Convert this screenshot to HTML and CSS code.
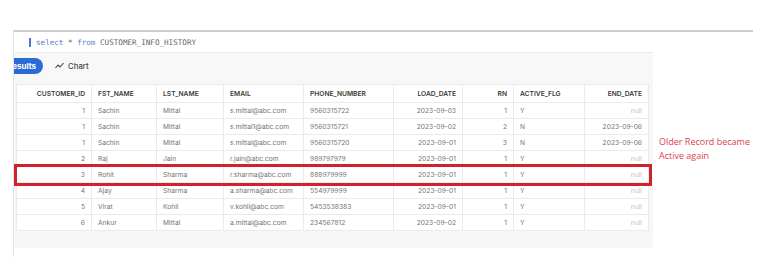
FILE: index.html
```html
<!DOCTYPE html>
<html lang="en">
  <head>
    <meta charset="UTF-8" />
    <meta name="viewport" content="width=device-width, initial-scale=1.0" />
    <title>Customer info history</title>
    <link rel="stylesheet" href="styles.css">
  </head>
  <body>
    <div class="editor">
      <div class="query">
        <span class="cursor"></span>
        <code><span class="kw">select</span> * <span class="kw">from</span> CUSTOMER_INFO_HISTORY</code>
      </div>

      <div class="tabs">
        <div class="pill">Results</div>
        <div class="tab">
          <svg width="9" height="7" viewBox="0 0 9 7">
            <polyline points="0.5,6 3,3 5,5 8.5,1" fill="none" stroke="#444" stroke-width="1.1" />
          </svg>
          Chart
        </div>
      </div>

      <div class="body">
        <div class="grid">
          <table>
            <thead>
              <tr>
                <th class="num c1">CUSTOMER_ID</th>
                <th class="c2">FST_NAME</th>
                <th class="c3">LST_NAME</th>
                <th class="c4">EMAIL</th>
                <th class="c5">PHONE_NUMBER</th>
                <th class="num c6">LOAD_DATE</th>
                <th class="num c7">RN</th>
                <th class="c8">ACTIVE_FLG</th>
                <th class="num c9">END_DATE</th>
              </tr>
            </thead>
            <tbody>
              <tr>
                <td class="num">1</td><td>Sachin</td><td>Mittal</td><td>s.mittal@abc.com</td><td>9560315722</td>
                <td class="num">2023-09-03</td><td class="num">1</td><td>Y</td><td class="num null">null</td>
              </tr>
              <tr>
                <td class="num">1</td><td>Sachin</td><td>Mittal</td><td>s.mittal1@abc.com</td><td>9560315721</td>
                <td class="num">2023-09-02</td><td class="num">2</td><td>N</td><td class="num">2023-09-06</td>
              </tr>
              <tr>
                <td class="num">1</td><td>Sachin</td><td>Mittal</td><td>s.mittal@abc.com</td><td>9560315720</td>
                <td class="num">2023-09-01</td><td class="num">3</td><td>N</td><td class="num">2023-09-06</td>
              </tr>
              <tr>
                <td class="num">2</td><td>Raj</td><td>Jain</td><td>r.jain@abc.com</td><td>989797979</td>
                <td class="num">2023-09-01</td><td class="num">1</td><td>Y</td><td class="num null">null</td>
              </tr>
              <tr class="marked">
                <td class="num">3</td><td>Rohit</td><td>Sharma</td><td>r.sharma@abc.com</td><td>888979999</td>
                <td class="num">2023-09-01</td><td class="num">1</td><td>Y</td><td class="num null">null</td>
              </tr>
              <tr>
                <td class="num">4</td><td>Ajay</td><td>Sharma</td><td>a.sharma@abc.com</td><td>554979999</td>
                <td class="num">2023-09-01</td><td class="num">1</td><td>Y</td><td class="num null">null</td>
              </tr>
              <tr>
                <td class="num">5</td><td>Virat</td><td>Kohli</td><td>v.kohli@abc.com</td><td>5453538383</td>
                <td class="num">2023-09-01</td><td class="num">1</td><td>Y</td><td class="num null">null</td>
              </tr>
              <tr>
                <td class="num">6</td><td>Ankur</td><td>Mittal</td><td>a.mittal@abc.com</td><td>234567812</td>
                <td class="num">2023-09-02</td><td class="num">1</td><td>Y</td><td class="num null">null</td>
              </tr>
            </tbody>
          </table>
        </div>

        <p class="note">Older Record became<br>Active again</p>
      </div>
    </div>
  </body>
</html>
```

FILE: styles.css
```css
* {
  margin: 0;
  padding: 0;
  box-sizing: border-box;
}

body {
  width: 768px;
  height: 257px;
  overflow: hidden;
  background: #fff;
  font-family: Inter, "Noto Sans", sans-serif;
}

.editor {
  margin: 30px 0 0 13px;
  width: 740px;
  height: 227px;
  border-top: 2px solid #c9ced6;
  border-left: 1px solid #e1e3e7;
}

/* query line */
.query {
  height: 20px;
  display: flex;
  align-items: center;
  padding-left: 15px;
}

.cursor {
  width: 2px;
  height: 9px;
  background: #4a78d8;
  margin-right: 5px;
}

.query code {
  font-family: "DejaVu Sans Mono", monospace;
  font-size: 7.6px;
  color: #666;
}

.query .kw {
  color: #5c7fc8;
}

/* tabs, scrolled a little to the left so the first pill is cut */
.tabs {
  width: 639px;
  height: 26px;
  display: flex;
  align-items: center;
  gap: 12px;
  background: #f8f8f9;
  border-top: 1px solid #ececee;
  overflow: hidden;
}

.pill {
  margin-left: -15px;
  height: 16px;
  padding: 0 7px 0 8px;
  border-radius: 8px;
  background: #2b6bd6;
  color: #fff;
  font-size: 8px;
  font-weight: 700;
  display: flex;
  align-items: center;
  flex-shrink: 0;
}

.tab {
  display: flex;
  align-items: center;
  gap: 4px;
  font-size: 7.8px;
  font-weight: 500;
  color: #444;
}

/* results */
.body {
  display: flex;
  align-items: flex-start;
}

.grid {
  width: 639px;
  height: 170px;
  background: #f7f7f8;
  padding: 6px 0 0 2px;
}

table {
  border-collapse: collapse;
  background: #fff;
  table-layout: fixed;
  width: 632px;
}

th,
td {
  border: 1px solid #ebebed;
  padding: 0 6px;
  font-size: 6.7px;
  text-align: left;
  white-space: nowrap;
  overflow: hidden;
}

th {
  height: 18px;
  font-weight: 600;
  color: #3a3a3a;
}

td {
  height: 16px;
  color: #747474;
}

.num {
  text-align: right;
}

td.null {
  color: #c2c2c2;
}

.c1 { width: 75px; }
.c2 { width: 65px; }
.c3 { width: 67px; }
.c4 { width: 80px; }
.c5 { width: 90px; }
.c6 { width: 69px; }
.c7 { width: 51px; }
.c8 { width: 71px; }
.c9 { width: 64px; }

tr.marked {
  outline: 3px solid #cf232c;
  outline-offset: 0;
}

.note {
  margin: 57px 0 0 6px;
  font-family: "Open Sans", sans-serif;
  font-size: 9px;
  line-height: 14px;
  color: #d9434b;
}
```
